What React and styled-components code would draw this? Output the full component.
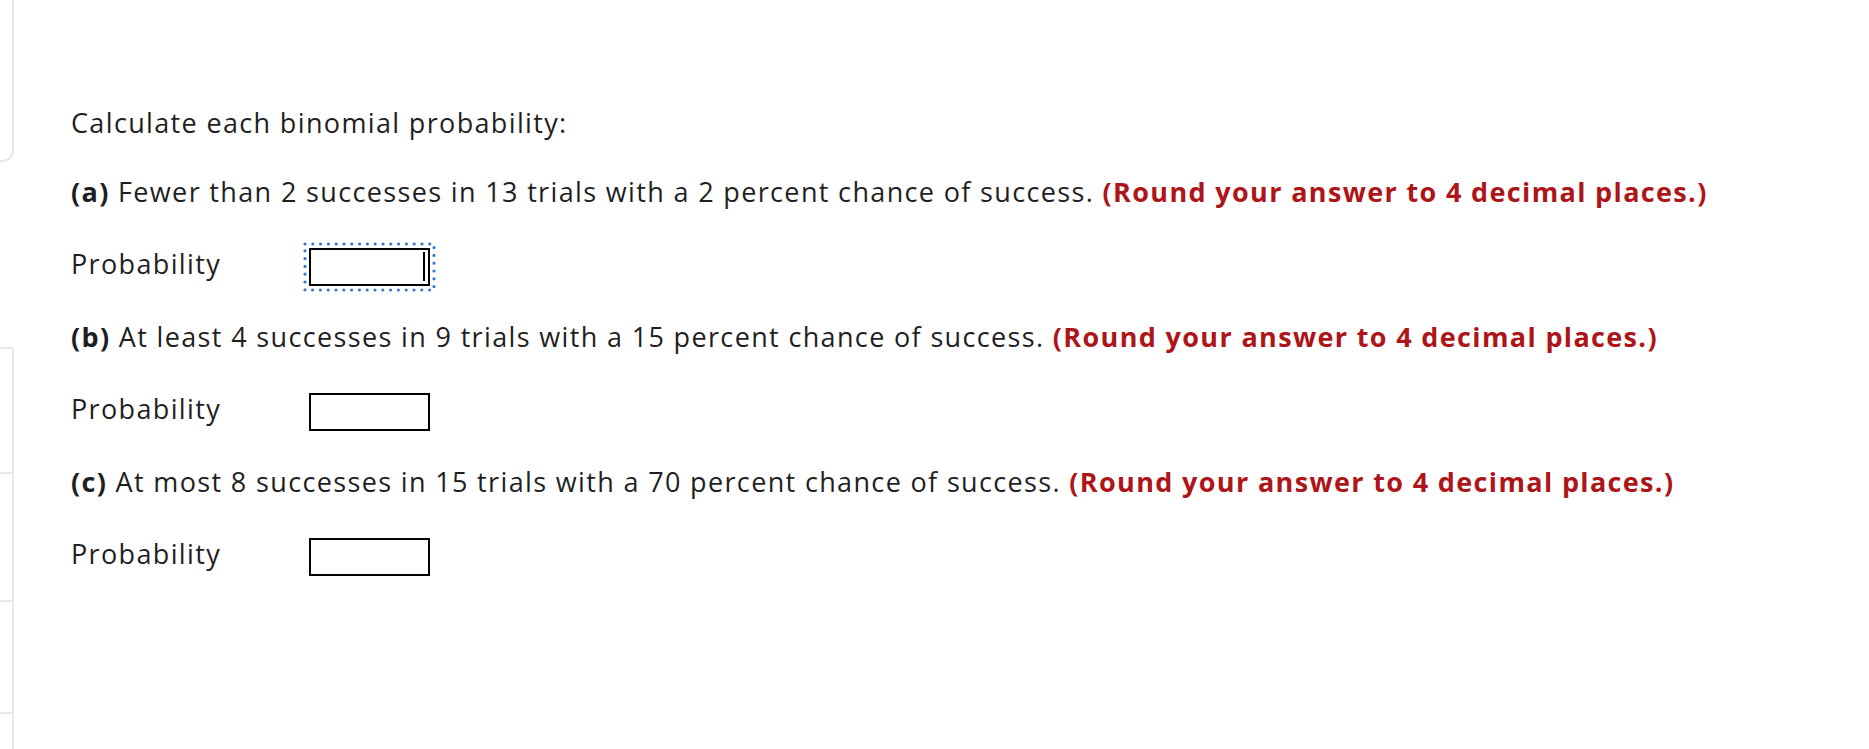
import React from "react";
import styled, { createGlobalStyle } from "styled-components";

const Global = createGlobalStyle`
  html, body { margin: 0; padding: 0; background: #ffffff; }
  body { font-family: "Open Sans", Lato, sans-serif; color: #1f1f1f; }
`;

const Page = styled.div`
  display: flex;
  min-height: 749px;
  width: 1869px;
`;

const Rail = styled.div`
  width: 14px;
  flex: none;
  display: flex;
  flex-direction: column;
`;

const RailCard = styled.div`
  height: 162px;
  border-right: 2px solid #e8e8e8;
  border-bottom: 2px solid #e8e8e8;
  border-bottom-right-radius: 12px;
  box-sizing: border-box;
`;

const RailGap = styled.div`
  height: ${(p) => p.$h}px;
`;

const RailItem = styled.div`
  height: ${(p) => (p.$h ? `${p.$h}px` : "auto")};
  flex: ${(p) => (p.$h ? "none" : "1")};
  border-top: 2px solid #e8e8e8;
  border-right: 2px solid #e8e8e8;
  box-sizing: border-box;
`;

const Content = styled.div`
  flex: 1;
  padding: 105px 0 0 57px;
  display: flex;
  flex-direction: column;
  gap: 33px;
  font-size: 27px;
  line-height: 36px;
  letter-spacing: 1.35px;
`;

const Block = styled.section`
  display: flex;
  flex-direction: column;
  gap: 38px;
`;

const Text = styled.p`
  margin: 0;
`;

const Part = styled.b`
  font-weight: 700;
`;

const Note = styled.b`
  font-weight: 700;
  color: #ad1518;
`;

const Row = styled.div`
  display: flex;
  align-items: center;
  height: 38px;
`;

const Label = styled.span`
  width: 238px;
  flex: none;
  margin-bottom: 6px;
`;

const Field = styled.div`
  position: relative;
  width: 121px;
  height: 38px;
  box-sizing: border-box;
  border: 2px solid #000;
  background: #fff;
`;

const Ring = styled.svg`
  position: absolute;
  left: -8px;
  top: -8px;
  width: 133px;
  height: 50px;
  overflow: visible;
  pointer-events: none;
`;

const Caret = styled.span`
  position: absolute;
  right: 3px;
  top: 2px;
  width: 2px;
  height: 29px;
  background: #000;
`;

function AnswerField({ focused }) {
  return (
    <Field>
      {focused && (
        <>
          <Ring viewBox="0 0 133 50">
            <rect
              x="2"
              y="2"
              width="129"
              height="46"
              fill="none"
              stroke="#3a79c8"
              strokeWidth="3.2"
              strokeLinecap="round"
              strokeDasharray="0 7.8"
            />
          </Ring>
          <Caret />
        </>
      )}
    </Field>
  );
}

const parts = [
  { id: "(a)", text: "Fewer than 2 successes in 13 trials with a 2 percent chance of success.", focused: true },
  { id: "(b)", text: "At least 4 successes in 9 trials with a 15 percent chance of success." },
  { id: "(c)", text: "At most 8 successes in 15 trials with a 70 percent chance of success." },
];

export default function App() {
  return (
    <>
      <Global />
      <Page>
        <Rail>
          <RailCard />
          <RailGap $h={185} />
          <RailItem $h={125} />
          <RailItem $h={128} />
          <RailItem $h={112} />
          <RailItem />
        </Rail>
        <Content>
          <Text>Calculate each binomial probability:</Text>
          {parts.map((p) => (
            <Block key={p.id}>
              <Text>
                <Part>{p.id}</Part> {p.text} <Note>(Round your answer to 4 decimal places.)</Note>
              </Text>
              <Row>
                <Label>Probability</Label>
                <AnswerField focused={p.focused} />
              </Row>
            </Block>
          ))}
        </Content>
      </Page>
    </>
  );
}
